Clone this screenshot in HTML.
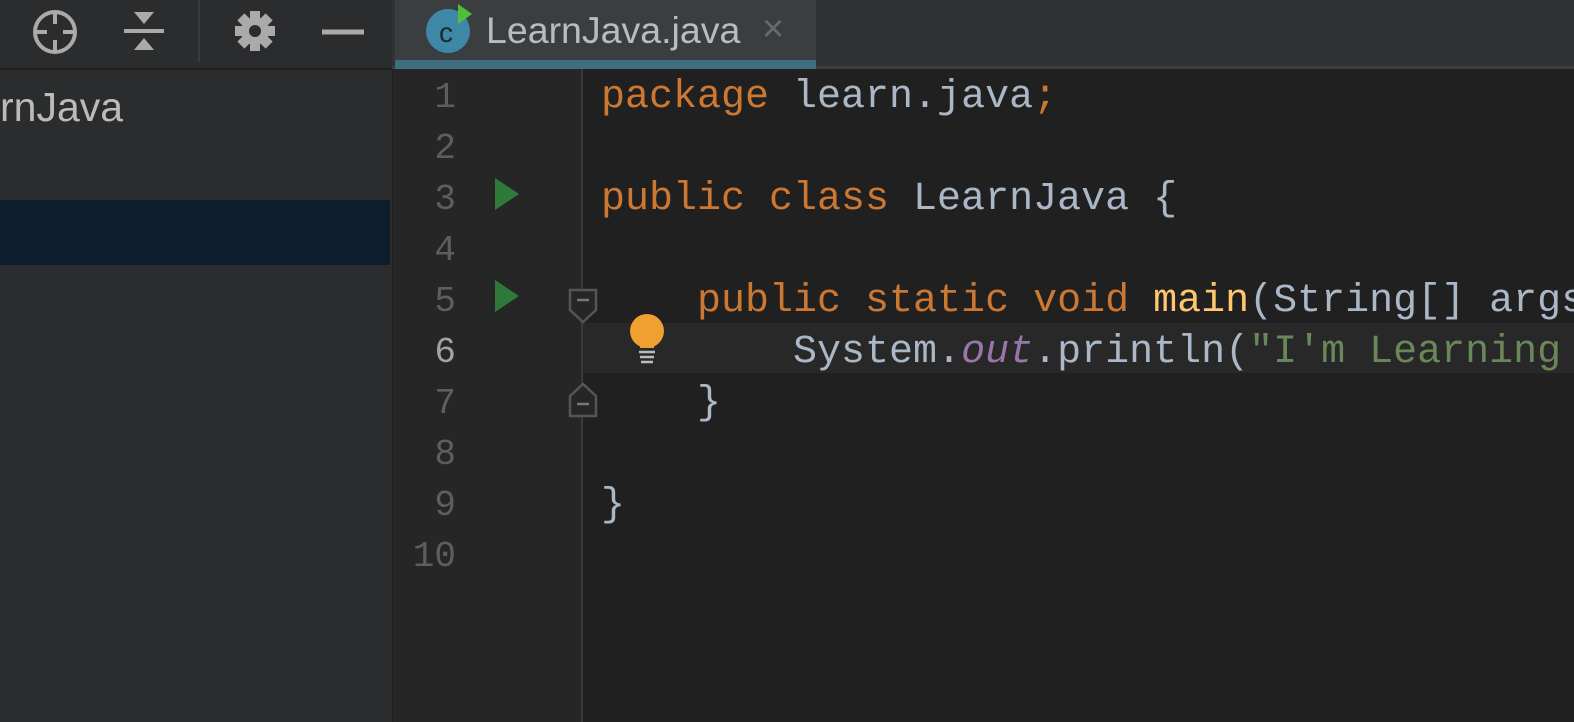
<!DOCTYPE html><html><head><style>
body{margin:0;width:1574px;height:722px;overflow:hidden;background:#202020;position:relative;font-family:"Liberation Mono",monospace}
.a{position:absolute}
.code{font-size:40px;line-height:51px;white-space:pre;color:#a9b7c6}
.k{color:#cc7832}.m{color:#ffc66d}.o{color:#9876aa;font-style:italic}.s{color:#6a8759}
.ln{font-size:36px;line-height:51px;color:#5c5e61;text-align:right;width:64px}
</style></head><body>
<div class="a" style="left:0;top:0;width:392px;height:722px;background:#2b2c2e"></div>
<div class="a" style="left:0;top:0;width:392px;height:68px;background:#2b2c2e;border-bottom:2px solid #222"></div>
<div class="a" style="left:0;top:200px;width:390px;height:65px;background:#0c1d2d"></div>
<div class="a" style="left:0;top:84px;font:41px 'Liberation Sans',sans-serif;color:#bbbbbb">rnJava</div>
<svg class="a" style="left:0;top:0" width="392" height="68">
<g fill="none" stroke="#aaa" stroke-width="4"><circle cx="55" cy="32" r="20"/><path d="M55 12v12M55 40v12M35 32h12M63 32h12"/></g>
<path d="M124 31h40" stroke="#aaa" stroke-width="4"/><path d="M134 12h20l-10 12zM134 50h20l-10-12z" fill="#aaa"/>
<line x1="199" y1="0" x2="199" y2="62" stroke="#3a3b3d" stroke-width="2"/>
<g transform="translate(255 31)" fill="#aaa"><circle r="14"/><g id="t"><rect x="-5" y="-20" width="10" height="10"/></g><use href="#t" transform="rotate(45)"/><use href="#t" transform="rotate(90)"/><use href="#t" transform="rotate(135)"/><use href="#t" transform="rotate(180)"/><use href="#t" transform="rotate(225)"/><use href="#t" transform="rotate(270)"/><use href="#t" transform="rotate(315)"/><circle r="6" fill="#2b2c2e"/></g>
<path d="M322 32h42" stroke="#aaa" stroke-width="5"/>
</svg>
<div class="a" style="left:392px;top:0;width:1182px;height:66px;background:#303133;border-bottom:3px solid #3c3c3c"></div>
<div class="a" style="left:395px;top:0;width:421px;height:60px;background:#3b3e41;border-bottom:9px solid #3f6e80"></div>
<svg class="a" style="left:420px;top:0" width="60" height="60"><circle cx="28" cy="31" r="22" fill="#3f87a6"/><text x="19" y="42" font-family="Liberation Sans" font-size="28" fill="#1c2830">c</text><path d="M38 4v20l14-10z" fill="#4fbf3a"/></svg>
<div class="a" style="left:486px;top:9px;font:37.5px 'Liberation Sans',sans-serif;color:#bbbbbb">LearnJava.java</div>
<div class="a" style="left:762px;top:8px;font:38px 'Liberation Sans',sans-serif;color:#6a6a6a">×</div>
<div class="a" style="left:393px;top:69px;width:188px;height:653px;background:#262627"></div>
<div class="a" style="left:581px;top:69px;width:2px;height:653px;background:#3a3a3a"></div>
<div class="a" style="left:583px;top:323px;width:991px;height:50px;background:#282828"></div>
<div class="a ln" style="left:392px;top:72px">1<br>2<br>3<br>4<br>5<br><span style="color:#a4a3a3">6</span><br>7<br>8<br>9<br>10</div>
<svg class="a" style="left:0;top:0" width="700" height="722">
<path d="M495 178v32l24-16zM495 280v32l24-16z" fill="#2f7a3a"/>
<path d="M570 290h26v20l-13 12l-13-12z" fill="#262627" stroke="#555" stroke-width="2.5"/>
<path d="M570 416h26v-20l-13-12l-13 12z" fill="#262627" stroke="#555" stroke-width="2.5"/>
<path d="M577 300h12M577 404h12" stroke="#777" stroke-width="2.5"/>
</svg>
<svg class="a" style="left:628px;top:314px" width="40" height="50"><circle cx="19" cy="17" r="17" fill="#f0a030"/><rect x="12" y="26" width="14" height="8" fill="#f0a030"/><path d="M11 38h16M12 43h14M13 48h12" stroke="#bbb" stroke-width="2.5"/></svg>
<div class="a code" style="left:601px;top:72px"><span class="k">package</span> learn.java<span class="k">;</span>

<span class="k">public class</span> LearnJava {

    <span class="k">public static void</span> <span class="m">main</span>(String[] args
        System.<span class="o">out</span>.println(<span class="s">"I'm Learning</span>
    }

}
</div>
</body></html>
